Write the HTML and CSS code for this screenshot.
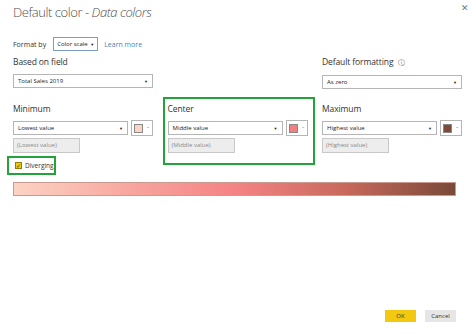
FILE: index.html
```html
<!DOCTYPE html>
<html lang="en">
<head>
    <meta charset="UTF-8">
    <title>Default color - Data colors</title>
    <link rel="stylesheet" href="styles.css">
</head>
<body>
    <div class="dialog">
        <div class="header">
            <h1>Default color - <em>Data colors</em></h1>
            <span class="close">&#x2715;</span>
        </div>

        <div class="format-row">
            <span class="small-label">Format by</span>
            <div class="select mini">Color scale <span class="caret">&#9660;</span></div>
            <a class="link">Learn more</a>
        </div>

        <div class="grid top-grid">
            <div class="col">
                <div class="label">Based on field</div>
                <div class="select">Total Sales 2019 <span class="caret">&#9660;</span></div>
            </div>
            <div class="col"></div>
            <div class="col">
                <div class="label">Default formatting <span class="info">&#9432;</span></div>
                <div class="select">As zero <span class="caret">&#9660;</span></div>
            </div>
        </div>

        <div class="grid stops">
            <div class="col">
                <div class="label">Minimum</div>
                <div class="stop-row">
                    <div class="select">Lowest value <span class="caret">&#9660;</span></div>
                    <div class="swatch-btn"><span class="swatch min"></span><span class="arrow">&#8964;</span></div>
                </div>
                <div class="value-box">(Lowest value)</div>
            </div>
            <div class="col highlight">
                <div class="label">Center</div>
                <div class="stop-row">
                    <div class="select">Middle value <span class="caret">&#9660;</span></div>
                    <div class="swatch-btn"><span class="swatch mid"></span><span class="arrow">&#8964;</span></div>
                </div>
                <div class="value-box">(Middle value)</div>
            </div>
            <div class="col">
                <div class="label">Maximum</div>
                <div class="stop-row">
                    <div class="select">Highest value <span class="caret">&#9660;</span></div>
                    <div class="swatch-btn"><span class="swatch max"></span><span class="arrow">&#8964;</span></div>
                </div>
                <div class="value-box">(Highest value)</div>
            </div>
        </div>

        <div class="diverging">
            <span class="check">&#10003;</span>
            <span>Diverging</span>
        </div>

        <div class="gradient"></div>

        <div class="footer">
            <button class="btn ok">OK</button>
            <button class="btn cancel">Cancel</button>
        </div>
    </div>
</body>
</html>
```

FILE: styles.css
```css
* {
    box-sizing: border-box;
    margin: 0;
    padding: 0;
    font-family: 'Open Sans', 'Noto Sans', sans-serif;
}

html, body {
    width: 474px;
    height: 334px;
    background-color: #fff;
    color: #333;
    overflow: hidden;
}

.dialog {
    position: relative;
    height: 334px;
    padding: 2px 13px 0 13px;
}

.header {
    display: flex;
    justify-content: space-between;
    height: 24px;
}

h1 {
    font-size: 13px;
    font-weight: 300;
    letter-spacing: -0.45px;
    color: #505050;
    line-height: 20px;
}

h1 em {
    font-style: italic;
}

.close {
    font-size: 9px;
    color: #777;
    margin-right: -8px;
    line-height: 12px;
}

.format-row {
    display: flex;
    align-items: center;
    gap: 5px;
    margin-top: 11px;
    height: 14px;
}

.small-label {
    font-size: 7px;
    color: #333;
    margin-right: 2px;
}

.link {
    font-size: 7px;
    color: #4d7fb8;
    margin-left: 1px;
}

.select {
    display: flex;
    align-items: center;
    justify-content: space-between;
    height: 14px;
    padding: 0 4px 0 4px;
    border: 1px solid #b5b5b5;
    background-color: #fff;
    font-size: 6px;
    color: #222;
    white-space: nowrap;
}

.select.mini {
    width: 45px;
    gap: 2px;
    padding: 0 3px;
    font-size: 6px;
    border-color: #7a9cc6;
}

.caret {
    font-size: 4px;
    color: #222;
}

.grid {
    display: grid;
    grid-template-columns: 140px 140px 140px;
    column-gap: 14.5px;
}

.top-grid {
    margin-top: 4px;
}

.label {
    font-size: 8.5px;
    letter-spacing: -0.1px;
    line-height: 14px;
    color: #333;
    margin-bottom: 5px;
}

.info {
    font-size: 7px;
    color: #666;
    margin-left: 2px;
}

.stops {
    margin-top: 13px;
}

.stops .label {
    margin-bottom: 4px;
}

.highlight {
    position: relative;
}

.highlight::before {
    content: "";
    position: absolute;
    left: -5px;
    right: -7px;
    top: -5px;
    bottom: -12px;
    border: 2px solid #22a43a;
    pointer-events: none;
}

.stop-row {
    display: flex;
    align-items: center;
    gap: 3px;
}

.stop-row .select {
    flex: 1;
}

.swatch-btn {
    display: flex;
    align-items: center;
    gap: 3px;
    width: 22px;
    height: 16px;
    padding: 0 2px;
    border: 1px solid #b5b5b5;
    background-color: #fff;
}

.swatch {
    display: block;
    width: 9px;
    height: 9px;
    border: 1px solid #888;
}

.swatch.min { background-color: #fcd3c4; }
.swatch.mid { background-color: #f47f80; }
.swatch.max { background-color: #7d4a38; }

.arrow {
    font-size: 5px;
    color: #777;
    line-height: 5px;
    margin-top: -3px;
}

.value-box {
    width: 67px;
    height: 15px;
    margin-top: 2px;
    padding: 0 3px;
    background-color: #ededed;
    border: 1px solid #c8c8c8;
    font-size: 6px;
    line-height: 13px;
    color: #8a8a8a;
}

.diverging {
    display: flex;
    align-items: center;
    gap: 3px;
    width: 49px;
    height: 19px;
    margin: 3px 0 0 -6px;
    padding-left: 6px;
    border: 2px solid #22a43a;
    font-size: 6.5px;
    color: #333;
}

.check {
    display: flex;
    align-items: center;
    justify-content: center;
    width: 7px;
    height: 7px;
    background-color: #f2c811;
    border: 1px solid #9a7d00;
    font-size: 6px;
    line-height: 6px;
    color: #333;
}

.gradient {
    height: 14px;
    width: 443px;
    margin-top: 7px;
    border: 1px solid #c99a92;
    background: linear-gradient(to right, #fcd3c4 0%, #f7a09a 30%, #f58383 50%, #c8695c 75%, #7a4a38 100%);
}

.footer {
    position: absolute;
    right: 18px;
    bottom: 12px;
    display: flex;
    gap: 9px;
}

.btn {
    width: 31px;
    height: 12px;
    border: none;
    font-size: 6px;
    color: #333;
}

.btn.ok {
    background-color: #f2c811;
}

.btn.cancel {
    background-color: #e6e6e6;
}
```
